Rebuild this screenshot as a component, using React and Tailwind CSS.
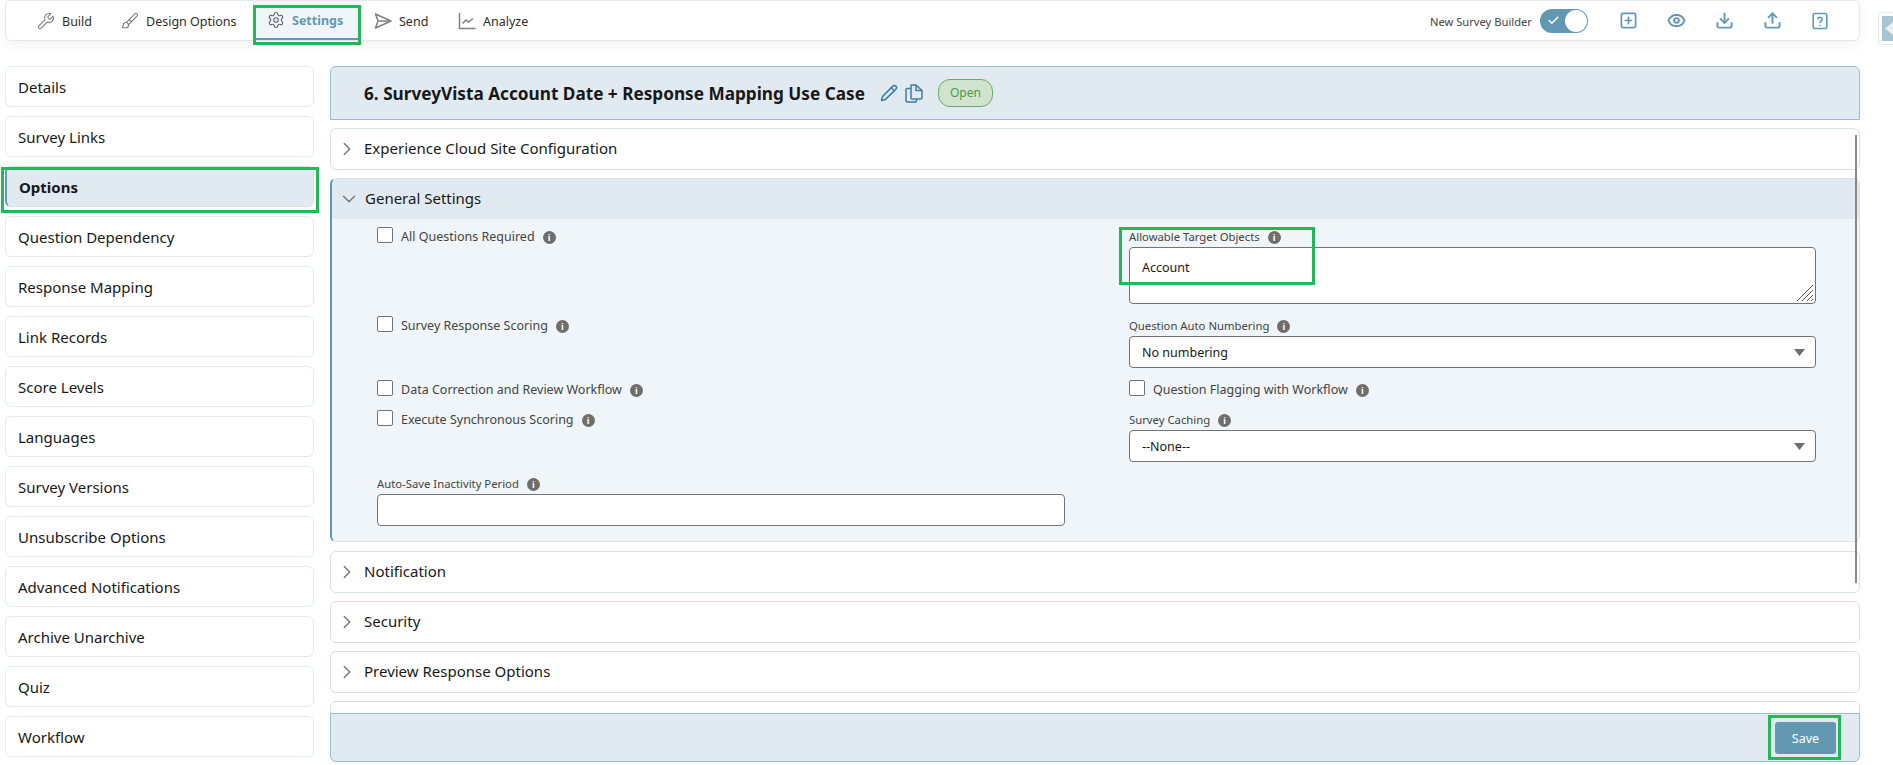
import React from 'react';
import { Wrench, Brush, Settings, ChevronRight, ChevronDown, Pencil, Check, SquarePlus, Eye, Download, Upload } from 'lucide-react';

const FONT = "font-['Noto_Sans','Open_Sans',sans-serif]";

const sideItems = ['Details', 'Survey Links', 'Options', 'Question Dependency', 'Response Mapping', 'Link Records', 'Score Levels', 'Languages', 'Survey Versions', 'Unsubscribe Options', 'Advanced Notifications', 'Archive Unarchive', 'Quiz', 'Workflow'];

function SendIcon(props) {
  return (
    <svg width="18" height="18" viewBox="0 0 18 18" fill="none" stroke="currentColor" strokeWidth="1.4" strokeLinejoin="round" {...props}>
      <path d="M1.500 2 17 9 1.500 16 4 9z" />
      <path d="M4 9h13" />
    </svg>
  );
}

function AnalyzeIcon(props) {
  return (
    <svg width="18" height="18" viewBox="0 0 18 18" fill="none" stroke="currentColor" strokeWidth="1.3" {...props}>
      <path d="M1.500 1v15.500H17.500" />
      <path d="M4.500 11.500 8 8l2.500 2L15 6.500" />
    </svg>
  );
}

function HelpSquare(props) {
  return (
    <svg width="18" height="18" viewBox="0 0 24 24" fill="none" stroke="currentColor" strokeWidth="2.200" strokeLinecap="round" {...props}>
      <rect x="3" y="2" width="18" height="20" rx="2" />
      <path d="M9.090 9a3 3 0 0 1 5.830 1c0 2-2.900 2.300-2.900 4" />
      <path d="M12 18h.010" />
    </svg>
  );
}

function CopyDocs(props) {
  return (
    <svg width="18" height="19" viewBox="0 0 18 19" fill="none" stroke="currentColor" strokeWidth="1.500" strokeLinejoin="round" {...props}>
      <path d="M6 1h5l6 5.500V14a1 1 0 0 1-1 1H7a1 1 0 0 1-1-1V2a1 1 0 0 1 1-1z" />
      <path d="M11 1v5.500h6" />
      <path d="M6 4.500H2a1 1 0 0 0-1 1V17a1 1 0 0 0 1 1h8.500a1 1 0 0 0 1-1v-2" />
    </svg>
  );
}

const tabs = [
  { label: 'Build', icon: Wrench, w: 'w-[97px] pl-[31px]' },
  { label: 'Design Options', icon: Brush, w: 'w-[150px] pl-[18px]' },
  { label: 'Settings', icon: Settings, w: 'w-[107px] pl-[14px]', active: true },
  { label: 'Send', icon: SendIcon, w: 'w-[86px] pl-[14px]' },
  { label: 'Analyze', icon: AnalyzeIcon, w: 'w-[90px] pl-[12px]' },
];

function InfoDot() {
  return (
    <span className="ml-[8px] flex h-[13px] w-[13px] items-center justify-center rounded-full bg-[#706e6b] text-[9px] leading-none font-bold text-white">i</span>
  );
}

function CheckRow({ label, className = '' }) {
  return (
    <div className={`flex h-[16px] items-center ${className}`}>
      <span className="mr-[8px] h-[16px] w-[16px] rounded-[2px] border border-[#747474] bg-white" />
      <div className="flex items-center pt-[4px]">
        <span className="text-[12.5px] text-[#444444]">{label}</span>
        <InfoDot />
      </div>
    </div>
  );
}

function FieldLabel({ label, className = '' }) {
  return (
    <div className={`flex h-[14px] items-center ${className}`}>
      <span className="text-[11.3px] text-[#444444]">{label}</span>
      <InfoDot />
    </div>
  );
}

function SelectBox({ value, className = '' }) {
  return (
    <div className={`flex h-[32px] items-center justify-between rounded-[4px] border border-[#747474] bg-white pr-[10px] pl-[12px] text-[12.5px] text-[#181818] ${className}`}>
      <span className="pt-[2px]">{value}</span>
      <svg width="11" height="7" viewBox="0 0 11 7"><path d="M0 0h11L5.500 7z" fill="#706e6b" /></svg>
    </div>
  );
}

function AccordionRow({ label }) {
  return (
    <div className="mb-[8px] flex h-[42px] shrink-0 items-center rounded-[6px] border border-[#d5e2e9] bg-white pl-[5px]">
      <ChevronRight size={22} strokeWidth={1.6} className="mr-[6px] text-[#777777]" />
      <span className="pb-[2px] text-[15px] text-[#181818]">{label}</span>
    </div>
  );
}

export default function App() {
  return (
    <div className={`relative h-screen w-full overflow-hidden bg-white ${FONT}`}>
      {/* Top bar */}
      <header className="ml-[5px] flex h-[41px] w-[1855px] items-center rounded-[6px] border border-[#e3e9ee] bg-white shadow-[0_4px_14px_rgba(0,0,0,0.05)]">
        {tabs.map((t) => (
          <div key={t.label} className={`flex h-full shrink-0 items-center whitespace-nowrap ${t.w} ${t.active ? 'border-b-2 border-[#6398b3] bg-[#eff5f8] font-bold text-[#6398b3]' : 'text-[#2e2e2e]'}`}>
            <t.icon size={18} strokeWidth={1.5} className={`mr-[7px] ${t.active ? 'text-[#666666]' : 'text-[#808080]'}`} />
            <span className="pt-[3px] text-[12.5px]">{t.label}</span>
          </div>
        ))}
        <div className="ml-auto flex items-center pr-[15px] text-[#6398b3]">
          <span className="mr-[8px] pt-[3px] text-[11.2px] text-[#444444]">New Survey Builder</span>
          <div className="mr-[16px] flex h-[24px] w-[48px] items-center justify-between rounded-full bg-[#6398b3] pr-[1px] pl-[7px]">
            <Check size={13} strokeWidth={3} className="text-white" />
            <span className="h-[22px] w-[22px] rounded-full bg-white" />
          </div>
          <div className="flex w-[48px] justify-center"><SquarePlus size={19} strokeWidth={2.200} /></div>
          <div className="flex w-[48px] justify-center"><Eye size={19} strokeWidth={2.400} /></div>
          <div className="flex w-[48px] justify-center"><Download size={19} strokeWidth={2.400} /></div>
          <div className="flex w-[48px] justify-center"><Upload size={19} strokeWidth={2.400} /></div>
          <div className="flex w-[48px] justify-center"><HelpSquare /></div>
        </div>
      </header>

      <div className="absolute top-[12px] left-[1878px] h-[33px] w-[15px] rounded-l-[4px] border border-r-0 border-[#e3e9ee] bg-white pt-[3px] pl-[3px]">
        <div className="flex h-[25px] w-[11px] items-center bg-[#a7c6d4] pl-[3px]">
          <svg width="8" height="13" viewBox="0 0 8 13"><path d="M8 0v13L0 6.500z" fill="#e8f0f4" /></svg>
        </div>
      </div>

      <div className="mt-[25px] ml-[5px] flex">
        {/* Sidebar */}
        <nav className="flex w-[309px] shrink-0 flex-col gap-[9px]">
          {sideItems.map((item) => (
            <div key={item} className={`flex h-[41px] items-center rounded-[6px] border pt-[2px] pl-[12px] text-[15px] text-[#181818] ${item === 'Options' ? 'border-[#d5e2e9] border-l-2 border-l-[#6398b3] bg-[#e2eaf1] font-bold' : 'border-[#e3ebf0] bg-white'}`}>
              {item}
            </div>
          ))}
        </nav>

        {/* Main */}
        <main className="ml-[16px] flex h-[696px] w-[1530px] flex-col">
          <div className="mb-[8px] flex h-[54px] shrink-0 items-center rounded-t-[6px] border border-[#9bbccd] bg-[#e2eaf1] pl-[33px]">
            <h1 className="pt-[2px] text-[17.2px] font-bold text-[#181818]">6. SurveyVista Account Date + Response Mapping Use Case</h1>
            <Pencil size={18} strokeWidth={2} className="ml-[15px] text-[#3f7fa3]" />
            <CopyDocs className="ml-[7px] text-[#3f7fa3]" />
            <span className="ml-[15px] flex h-[28px] w-[55px] items-center justify-center rounded-[12px] border border-[#6aaa68] bg-[#d0e4cd] text-[12px] text-[#4b9a4b]">Open</span>
          </div>

          <div className="flex min-h-0 flex-1 flex-col overflow-hidden">
            <AccordionRow label="Experience Cloud Site Configuration" />

            {/* General Settings */}
            <section className="mb-[9px] flex h-[364px] shrink-0 flex-col rounded-[6px] border border-l-2 border-[#d5e2e9] border-l-[#5e97b2] bg-[#eff5f8]">
              <div className="flex h-[40px] shrink-0 items-center rounded-t-[6px] bg-[#e2eaf1] pl-[6px]">
                <ChevronDown size={22} strokeWidth={1.6} className="mr-[5px] text-[#777777]" />
                <span className="pb-[2px] text-[15px] text-[#181818]">General Settings</span>
              </div>
              <div className="flex">
                <div className="ml-[45px] w-[752px]">
                  <CheckRow label="All Questions Required" className="mt-[8px]" />
                  <CheckRow label="Survey Response Scoring" className="mt-[73px]" />
                  <CheckRow label="Data Correction and Review Workflow" className="mt-[48px]" />
                  <CheckRow label="Execute Synchronous Scoring" className="mt-[14px]" />
                  <FieldLabel label="Auto-Save Inactivity Period" className="mt-[51px]" />
                  <div className="mt-[3px] h-[32px] w-[688px] rounded-[4px] border border-[#747474] bg-white" />
                </div>
                <div className="w-[687px]">
                  <FieldLabel label="Allowable Target Objects" className="mt-[11px]" />
                  <div className="relative mt-[3px] h-[57px] rounded-[4px] border border-[#747474] bg-white pt-[11px] pl-[12px] text-[12.5px] text-[#181818]">
                    Account
                    <svg className="absolute right-[1px] bottom-[1px]" width="18" height="18" viewBox="0 0 18 18"><path d="M1 17 17 1M6 17 17 6M11 17l6-6M15 17l2-2" stroke="#555" strokeWidth="1" fill="none" /></svg>
                  </div>
                  <FieldLabel label="Question Auto Numbering" className="mt-[15px]" />
                  <SelectBox value="No numbering" className="mt-[3px]" />
                  <CheckRow label="Question Flagging with Workflow" className="mt-[12px]" />
                  <FieldLabel label="Survey Caching" className="mt-[17px]" />
                  <SelectBox value="--None--" className="mt-[3px]" />
                </div>
              </div>
            </section>

            <AccordionRow label="Notification" />
            <AccordionRow label="Security" />
            <AccordionRow label="Preview Response Options" />
            <div className="h-[42px] shrink-0 rounded-[6px] border border-[#d5e2e9] bg-white" />
          </div>

          <footer className="flex h-[49px] shrink-0 items-center justify-end rounded-b-[6px] border border-[#9bbccd] bg-[#e2eaf1] pr-[23px]">
            <button className="h-[32px] w-[61px] rounded-[3px] bg-[#6398b3] pt-[4px] text-[12.5px] text-white">Save</button>
          </footer>
        </main>
      </div>

      {/* Page scrollbar */}
      <div className="absolute top-[135px] left-[1855px] h-[448px] w-[2px] bg-[#888888]" />

      {/* Green annotation boxes */}
      <div className="absolute top-[5px] left-[253px] h-[40px] w-[108px] border-[3px] border-[#22b855]" />
      <div className="absolute top-[167px] left-[1px] h-[46px] w-[318px] border-[3px] border-[#22b855]" />
      <div className="absolute top-[227px] left-[1119px] h-[58px] w-[196px] border-[3px] border-[#22b855]" />
      <div className="absolute top-[715px] left-[1768px] h-[45px] w-[73px] border-[3px] border-[#22b855]" />
    </div>
  );
}
